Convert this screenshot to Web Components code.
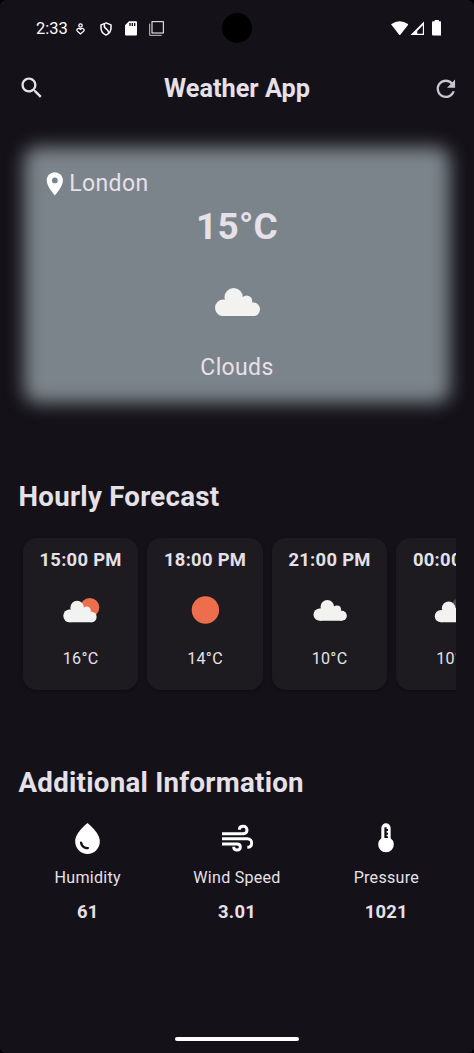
<!DOCTYPE html>
<html lang="en">
<head>
<meta charset="utf-8">
<title>Weather App</title>
<style>
  body {
    margin: 0;
    background: #000;
    font-family: Roboto, "Noto Sans", sans-serif;
    color: #e6e0e9;
  }
</style>
</head>
<body>
<weather-app></weather-app>

<script>
const ICONS = {
  search: ['0 0 24 24', '<path d="M15.5 14h-.79l-.28-.27C15.41 12.59 16 11.11 16 9.5 16 5.91 13.09 3 9.5 3S3 5.91 3 9.5 5.91 16 9.5 16c1.61 0 3.09-.59 4.23-1.57l.27.28v.79l5 4.99L20.49 19l-4.99-5zm-6 0C7.01 14 5 11.99 5 9.5S7.01 5 9.5 5 14 7.01 14 9.5 11.99 14 9.5 14z"/>'],
  refresh: ['0 0 24 24', '<path d="M17.65 6.35C16.2 4.9 14.21 4 12 4c-4.42 0-7.99 3.58-7.99 8s3.57 8 7.99 8c3.73 0 6.84-2.55 7.73-6h-2.08c-.82 2.33-3.04 4-5.65 4-3.31 0-6-2.69-6-6s2.69-6 6-6c1.66 0 3.14.69 4.22 1.78L13 11h7V4l-2.35 2.35z"/>'],
  place: ['0 0 24 24', '<path d="M12 2C8.13 2 5 5.13 5 9c0 5.25 7 13 7 13s7-7.75 7-13c0-3.87-3.13-7-7-7zm0 9.500a2.500 2.500 0 0 1 0-5 2.500 2.500 0 0 1 0 5z"/>'],
  drop: ['0 0 24 24', '<path d="M12 2c-5.33 4.55-8 8.48-8 11.8 0 4.98 3.8 8.2 8 8.2s8-3.22 8-8.2C20 10.48 17.33 6.55 12 2zM7.83 14c.37 0 .67.26.74.62.41 2.22 2.28 2.98 3.64 2.87.43-.02.79.32.79.75 0 .4-.32.73-.72.75-2.13.13-4.62-1.09-5.19-4.12-.08-.45.28-.87.74-.87z"/>'],
  wind: ['0 0 132 132', '<g fill="none" stroke="currentColor" stroke-width="8.800"><path d="M21 53H85C92 53 96 48 96 42 96 35 91 31 85 31 78 31 73 35 73 41"/><path d="M21 68.500H97C105 68.500 110 74 110 81 110 89 105 94 97 94"/><path d="M21 84H66C72 84 76 87.500 76 93 76 98 72 102 66 102 60 102 56 98 56 92"/></g>'],
  thermo: ['-4 0 132 132', '<path fill-rule="evenodd" d="M48 36a14 14 0 0 1 28 0V66.500A23.500 23.500 0 1 1 48 66.500zM57 36V66H68V61H64V56H68V50H64V45H68V39H64V34H59Q57 34 57 36z"/>'],
  cloud: ['0 0 135 85', '<g fill="#f2f2f0"><circle cx="25" cy="59.500" r="25"/><circle cx="56" cy="27.500" r="27.500"/><circle cx="95" cy="39" r="16.500"/><circle cx="114.500" cy="64" r="20.500"/><path d="M25 35H95V43.500H115V84.500H25Z"/></g>'],
  // phone status bar
  care: ['0 0 24 34', '<g fill="none" stroke="currentColor" stroke-width="3.500"><circle cx="12" cy="7" r="4.500"/><path d="M12 31L3.500 23C0 17 7 12.500 12 18 17 12.500 24 17 20.500 23Z"/></g>'],
  shield: ['0 0 36 44', '<path fill="none" stroke="currentColor" stroke-width="4.500" d="M18 3L33 9V19C33 30 27 37 18 41 9 37 3 30 3 19V9Z"/><path fill="none" stroke="currentColor" stroke-width="5" d="M13 5V13C13 22 26 22 26 34"/>'],
  sd: ['0 0 36 44', '<path fill-rule="evenodd" d="M12 1H33Q36 1 36 4V41Q36 44 33 44H3Q0 44 0 41V13ZM13 6V15H17V6ZM20 6V15H24V6ZM27 6V15H31V6Z"/>'],
  frames: ['0 0 45 45', '<g fill="none" stroke="currentColor" stroke-width="3"><rect x="9" y="2" width="34" height="34"/><path d="M2 8V43H38" opacity=".75"/></g>'],
  wifi: ['0 0 52 44', '<path d="M0 10Q26-9 52 10L26 44Z"/>'],
  signal: ['0 0 44 44', '<path fill-rule="evenodd" d="M44 0V44H0ZM39 13L22 30V39H39Z"/>'],
  battery: ['0 0 28 46', '<path d="M8 0H20V4H25Q28 4 28 7V43Q28 46 25 46H3Q0 46 0 43V7Q0 4 3 4H8Z"/>']
};

class AppIcon extends HTMLElement {
  connectedCallback() {
    const [box, shape] = ICONS[this.getAttribute('name')];
    this.attachShadow({ mode: 'open' });
    this.shadowRoot.innerHTML = `
      <style>
        :host { display: block; flex: none; }
        svg { display: block; width: 100%; height: 100%; fill: currentColor; }
      </style>
      <svg viewBox="${box}" preserveAspectRatio="none" aria-hidden="true">${shape}</svg>
    `;
  }
}

class StatusBar extends HTMLElement {
  connectedCallback() {
    this.attachShadow({ mode: 'open' });
    this.shadowRoot.innerHTML = `
      <style>
        :host {
          display: grid;
          grid-template-columns: 1fr 30px 1fr;
          align-items: center;
          height: 56px;
          padding: 0 33px 0 36px;
          color: #fff;
        }
        .side { display: flex; align-items: center; padding-top: 1px; }
        .right { justify-content: flex-end; padding-top: 0; }
        .time { width: 32px; font-size: 16.500px; line-height: 20px; margin-right: 8px; white-space: nowrap; }
        .camera { width: 30px; height: 30px; margin-left: -1.500px; border-radius: 50%; background: #000; }
        .care { width: 9px; height: 12px; margin-right: 15px; }
        .shield { width: 12px; height: 14px; margin-right: 13px; }
        .sd { width: 12px; height: 14.500px; margin-right: 12px; }
        .frames { width: 15px; height: 15px; }
        .wifi { width: 17.500px; height: 14.500px; margin-right: 1.500px; }
        .signal { width: 14.500px; height: 14.500px; margin-right: 7.500px; }
        .battery { width: 9.500px; height: 15.500px; }
      </style>
      <div class="side">
        <span class="time">2:33</span>
        <app-icon class="care" name="care"></app-icon>
        <app-icon class="shield" name="shield"></app-icon>
        <app-icon class="sd" name="sd"></app-icon>
        <app-icon class="frames" name="frames"></app-icon>
      </div>
      <div class="camera"></div>
      <div class="side right">
        <app-icon class="wifi" name="wifi"></app-icon>
        <app-icon class="signal" name="signal"></app-icon>
        <app-icon class="battery" name="battery"></app-icon>
      </div>
    `;
  }
}

class AppHeader extends HTMLElement {
  connectedCallback() {
    this.attachShadow({ mode: 'open' });
    this.shadowRoot.innerHTML = `
      <style>
        :host {
          display: flex;
          align-items: center;
          height: 64px;
          padding: 0 14px 0 18px;
        }
        h1 { flex: 1; margin: 1px 4px 0 0; text-align: center; font-size: 25.300px; line-height: 32px; font-weight: 700; }
        app-icon { width: 27.700px; height: 27.700px; }
        .refresh { color: #cac4d0; margin-top: 1px; }
      </style>
      <app-icon name="search"></app-icon>
      <h1><slot></slot></h1>
      <app-icon class="refresh" name="refresh"></app-icon>
    `;
  }
}

class CurrentWeather extends HTMLElement {
  connectedCallback() {
    this.attachShadow({ mode: 'open' });
    this.shadowRoot.innerHTML = `
      <style>
        :host { display: grid; height: 256px; margin: 27px 24px 0; }
        .glow, .content { grid-area: 1 / 1; }
        .glow { background: #7c848b; border-radius: 14px; filter: blur(9px); }
        .content { z-index: 1; display: flex; flex-direction: column; align-items: center; }
        .place { align-self: flex-start; display: flex; align-items: center; height: 28px; margin: 22.500px 0 0 17px; font-size: 23px; letter-spacing: .4px; }
        .place app-icon { width: 27.700px; height: 27.700px; color: #fff; }
        .place span { padding-left: .500px; }
        .temp { margin-top: 7px; font-size: 36.900px; line-height: 44px; font-weight: 700; letter-spacing: .29px; }
        .cloud { width: 45px; height: 28.300px; margin-top: 39.500px; }
        .sky { margin-top: 37.500px; font-size: 23px; line-height: 28px; letter-spacing: .35px; }
      </style>
      <div class="glow"></div>
      <div class="content">
        <div class="place"><app-icon name="place"></app-icon><span>${this.getAttribute('city')}</span></div>
        <div class="temp">${this.getAttribute('temp')}</div>
        <app-icon class="cloud" name="cloud"></app-icon>
        <div class="sky">${this.getAttribute('sky')}</div>
      </div>
    `;
  }
}

class SkyIcon extends HTMLElement {
  connectedCallback() {
    this.attachShadow({ mode: 'open' });
    this.shadowRoot.innerHTML = `
      <style>
        :host { display: grid; place-items: center; width: 58px; height: 58px; }
        svg { width: 58px; height: 58px; display: none; }
        :host([kind="clear"]) .clear,
        :host([kind="partly"]) .partly,
        :host([kind="clouds"]) .clouds,
        :host([kind="broken"]) .broken { display: block; }
      </style>
      <svg class="clear" viewBox="0 0 58 58"><circle cx="29.400" cy="29" r="13.700" fill="#ec6e4c"/></svg>
      <svg class="partly" viewBox="0 0 58 58"><circle cx="37.800" cy="26.500" r="9.500" fill="#ec6e4c"/><g transform="translate(11.300 19.700) scale(.247 .255)">${ICONS.cloud[1]}</g></svg>
      <svg class="clouds" viewBox="0 0 58 58"><g transform="translate(12.500 18.900) scale(.247)">${ICONS.cloud[1]}</g></svg>
      <svg class="broken" viewBox="0 0 58 58"><circle cx="34" cy="25" r="7.500" fill="#48484a"/><g transform="translate(9.800 20.500) scale(.247)">${ICONS.cloud[1]}</g></svg>
    `;
  }
}

class HourCard extends HTMLElement {
  connectedCallback() {
    this.attachShadow({ mode: 'open' });
    this.shadowRoot.innerHTML = `
      <style>
        :host {
          flex: none;
          display: flex;
          flex-direction: column;
          align-items: center;
          box-sizing: border-box;
          width: 115.200px;
          height: 152px;
          padding-top: 10.500px;
          border-radius: 14px;
          background: #1d1b20;
          box-shadow: 0 1px 3px rgba(0, 0, 0, .3);
        }
        .time { font-size: 18.400px; line-height: 24px; font-weight: 700; letter-spacing: .29px; white-space: nowrap; }
        sky-icon { margin-top: 9px; }
        .temp { margin-top: 9px; font-size: 16.100px; line-height: 22px; letter-spacing: .29px; }
      </style>
      <div class="time">${this.getAttribute('time')}</div>
      <sky-icon kind="${this.getAttribute('kind')}"></sky-icon>
      <div class="temp">${this.getAttribute('temp')}</div>
    `;
  }
}

class InfoItem extends HTMLElement {
  connectedCallback() {
    this.attachShadow({ mode: 'open' });
    this.shadowRoot.innerHTML = `
      <style>
        :host { display: flex; flex-direction: column; align-items: center; }
        app-icon { height: 44px; width: 44px; color: #fff; }
        app-icon[name="drop"] { width: 37px; height: 37px; margin: 3.500px 0; }
        .label { margin-top: 6px; font-size: 16.100px; line-height: 24px; letter-spacing: .25px; }
        .value { margin-top: 10px; font-size: 18.400px; line-height: 24px; font-weight: 700; letter-spacing: .2px; }
      </style>
      <app-icon name="${this.getAttribute('icon')}"></app-icon>
      <div class="label">${this.getAttribute('label')}</div>
      <div class="value">${this.getAttribute('value')}</div>
    `;
  }
}

class WeatherApp extends HTMLElement {
  connectedCallback() {
    this.attachShadow({ mode: 'open' });
    this.shadowRoot.innerHTML = `
      <style>
        :host {
          display: flex;
          flex-direction: column;
          box-sizing: border-box;
          height: 1053px;
          overflow: hidden;
          border-radius: 6px;
          background: #141218;
        }
        h2 { margin: 0 18.500px; font-size: 27.650px; line-height: 36px; font-weight: 700; letter-spacing: .27px; }
        .hourly { margin-top: 76px; }
        .hours { display: flex; gap: 9.300px; overflow: hidden; height: 160px; box-sizing: border-box; margin: 19px 18.500px 0; padding: 3.500px 0 0 4.500px; }
        .more { margin-top: 71px; }
        .info { display: grid; grid-template-columns: repeat(3, 1fr); margin: 15px 13px 0; }
        .handle { width: 124px; height: 4px; margin: auto auto 12px; border-radius: 2px; background: #fff; }
      </style>
      <status-bar></status-bar>
      <app-header>Weather App</app-header>
      <current-weather city="London" temp="15°C" sky="Clouds"></current-weather>
      <h2 class="hourly">Hourly Forecast</h2>
      <div class="hours">
        <hour-card time="15:00 PM" kind="partly" temp="16°C"></hour-card>
        <hour-card time="18:00 PM" kind="clear" temp="14°C"></hour-card>
        <hour-card time="21:00 PM" kind="clouds" temp="10°C"></hour-card>
        <hour-card time="00:00 PM" kind="broken" temp="10°C"></hour-card>
      </div>
      <h2 class="more">Additional Information</h2>
      <div class="info">
        <info-item icon="drop" label="Humidity" value="61"></info-item>
        <info-item icon="wind" label="Wind Speed" value="3.01"></info-item>
        <info-item icon="thermo" label="Pressure" value="1021"></info-item>
      </div>
      <div class="handle"></div>
    `;
  }
}

customElements.define('app-icon', AppIcon);
customElements.define('status-bar', StatusBar);
customElements.define('app-header', AppHeader);
customElements.define('current-weather', CurrentWeather);
customElements.define('sky-icon', SkyIcon);
customElements.define('hour-card', HourCard);
customElements.define('info-item', InfoItem);
customElements.define('weather-app', WeatherApp);
</script>
</body>
</html>
